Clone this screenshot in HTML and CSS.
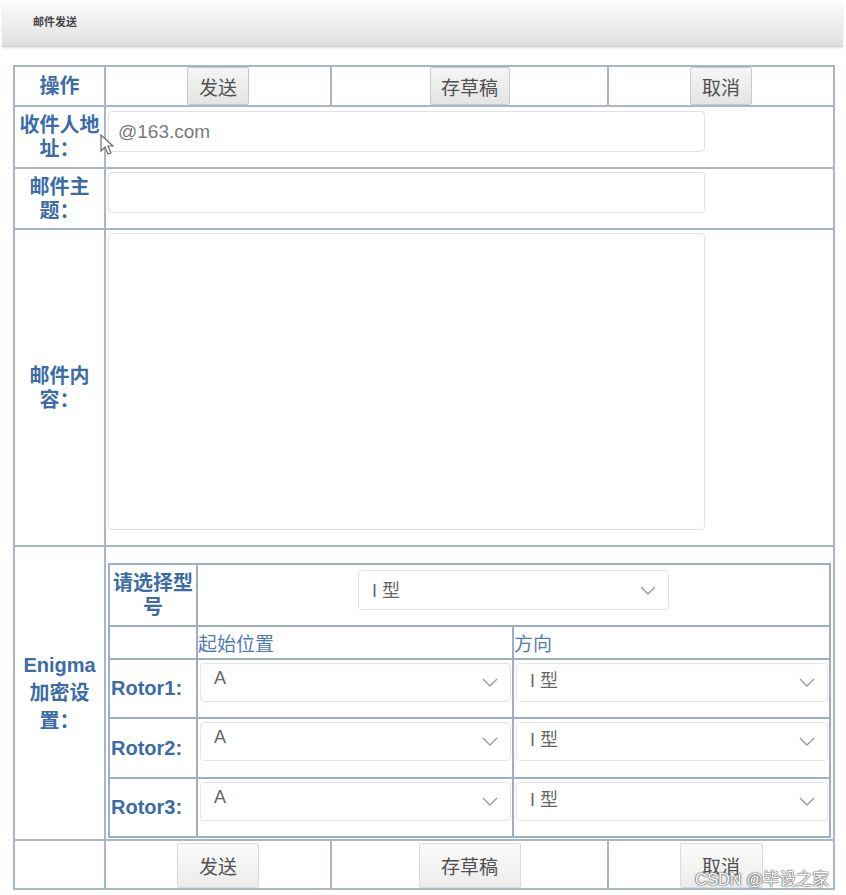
FILE: index.html
```html
<!DOCTYPE html>
<html lang="zh-CN">
<head>
<meta charset="utf-8">
<title>邮件发送</title>
<link rel="stylesheet" href="styles.css">
</head>
<body>
<div class="titlebar"><span class="title">邮件发送</span></div>

<div class="form">
  <div class="cell label">操作</div>
  <div class="cell btncell"><button class="btn w62">发送</button></div>
  <div class="cell btncell"><button class="btn w80">存草稿</button></div>
  <div class="cell btncell"><button class="btn w62">取消</button></div>

  <div class="cell label">收件人地址：</div>
  <div class="cell span3"><div class="field">@163.com</div></div>

  <div class="cell label">邮件主题：</div>
  <div class="cell span3"><div class="field field-sub"></div></div>

  <div class="cell label">邮件内容：</div>
  <div class="cell span3"><div class="area"></div></div>

  <div class="cell label tall">Enigma加密设置：</div>
  <div class="cell span3">
    <div class="enigma">
      <div class="icell label">请选择型号</div>
      <div class="icell span2 center">
        <div class="select sel-model"><span>I 型</span><svg class="chev" viewBox="0 0 16 9"><path d="M1 1 L8 8 L15 1"/></svg></div>
      </div>

      <div class="icell"></div>
      <div class="icell head">起始位置</div>
      <div class="icell head">方向</div>

      <div class="icell rlabel">Rotor1:</div>
      <div class="icell"><div class="select"><span>A</span><svg class="chev" viewBox="0 0 16 9"><path d="M1 1 L8 8 L15 1"/></svg></div></div>
      <div class="icell"><div class="select"><span>I 型</span><svg class="chev" viewBox="0 0 16 9"><path d="M1 1 L8 8 L15 1"/></svg></div></div>

      <div class="icell rlabel">Rotor2:</div>
      <div class="icell"><div class="select"><span>A</span><svg class="chev" viewBox="0 0 16 9"><path d="M1 1 L8 8 L15 1"/></svg></div></div>
      <div class="icell"><div class="select"><span>I 型</span><svg class="chev" viewBox="0 0 16 9"><path d="M1 1 L8 8 L15 1"/></svg></div></div>

      <div class="icell rlabel">Rotor3:</div>
      <div class="icell"><div class="select"><span>A</span><svg class="chev" viewBox="0 0 16 9"><path d="M1 1 L8 8 L15 1"/></svg></div></div>
      <div class="icell"><div class="select"><span>I 型</span><svg class="chev" viewBox="0 0 16 9"><path d="M1 1 L8 8 L15 1"/></svg></div></div>
    </div>
  </div>

  <div class="cell"></div>
  <div class="cell btncell bottom"><button class="btn big w82">发送</button></div>
  <div class="cell btncell bottom"><button class="btn big w102">存草稿</button></div>
  <div class="cell btncell bottom"><button class="btn big w83">取消</button></div>
</div>

<svg class="cursor" viewBox="0 0 14 22"><path d="M1 1 L1 17 L5 13 L8 20 L11 19 L8 12 L13 12 Z"/></svg>
<div class="watermark">CSDN @毕设之家</div>
</body>
</html>
```

FILE: styles.css
```css
* { box-sizing: border-box; }

html, body {
  margin: 0;
  padding: 0;
  background: #ffffff;
}

body {
  position: relative;
  width: 846px;
  height: 895px;
  overflow: hidden;
  font-family: "Liberation Sans", "Noto Sans CJK SC", sans-serif;
}

.titlebar {
  margin: 2px 3px 0 2px;
  height: 45px;
  background: linear-gradient(#fafafa, #e6e6e6 80%, #dcdcdc);
  border-bottom: 1px solid #cfcfcf;
  box-shadow: 0 1px 2px rgba(0, 0, 0, 0.12);
  display: flex;
  align-items: center;
  padding-left: 31px;
  padding-bottom: 6px;
}

.title {
  font-size: 11px;
  font-weight: bold;
  color: #444444;
}

.form {
  display: grid;
  grid-template-columns: 89px 224px 275px 224px;
  grid-template-rows: 38px 60px 59px 315px 292px 47px;
  gap: 2px;
  padding: 2px;
  background: #a7b6ca;
  width: max-content;
  margin: 18px 0 0 13px;
}

.cell {
  background: #ffffff;
  min-width: 0;
}

.span3 { grid-column: span 3; }
.span2 { grid-column: span 2; }

.label {
  display: flex;
  align-items: center;
  justify-content: center;
  text-align: center;
  font-size: 20px;
  line-height: 24px;
  font-weight: bold;
  color: #3b6ca8;
  padding: 0 3px;
}

.label.tall {
  line-height: 28px;
}

.btncell {
  display: flex;
  justify-content: center;
  align-items: stretch;
}

.btncell.bottom {
  padding-top: 2px;
}

.btn {
  font-family: "Liberation Sans", "Noto Sans CJK SC", sans-serif;
  font-size: 19px;
  color: #505050;
  background: linear-gradient(#f6f6f6, #e4e4e4);
  border: 1px solid #c9c9c9;
  border-radius: 2px;
  padding: 0;
  margin: 0;
}

.btn.big {
  background: linear-gradient(#fbfbfb, #ececec);
  border-color: #dadada;
}

.w62 { width: 62px; }
.w80 { width: 80px; }
.w82 { width: 82px; }
.w83 { width: 83px; }
.w102 { width: 102px; }

.field {
  margin: 4px 0 0 2px;
  width: 597px;
  height: 41px;
  border: 1px solid #e2e2e2;
  border-radius: 4px;
  font-size: 19px;
  color: #7a7a7a;
  padding: 9px 0 0 9px;
}

.field-sub {
  margin-top: 3px;
}

.area {
  margin: 3px 0 0 2px;
  width: 597px;
  height: 297px;
  border: 1px solid #e2e2e2;
  border-radius: 4px;
}

.enigma {
  display: grid;
  grid-template-columns: 86px 314px 315px;
  grid-template-rows: 60px 31px 57px 58px 57px;
  gap: 2px;
  padding: 2px;
  background: #9eafc5;
  margin: 16px 2px 0 2px;
}

.icell {
  background: #ffffff;
  min-width: 0;
}

.icell.center {
  display: flex;
  justify-content: center;
}

.head {
  display: flex;
  align-items: center;
  font-size: 19px;
  color: #4f7cb3;
}

.rlabel {
  display: flex;
  align-items: center;
  padding-left: 1px;
  font-size: 20px;
  font-weight: bold;
  color: #3b6ca8;
}

.select {
  display: flex;
  align-items: center;
  justify-content: space-between;
  height: 39px;
  margin: 3px 1px 0 2px;
  border: 1px solid #e4e4e4;
  border-radius: 4px;
  padding: 0 12px 0 13px;
  font-size: 18px;
  color: #666666;
}

.select span {
  margin-top: -8px;
}

.sel-model {
  width: 311px;
  height: 40px;
  margin: 5px 0 0 0;
}

.sel-model span {
  margin-top: -2px;
}

.chev {
  width: 16px;
  height: 9px;
  fill: none;
  stroke: #9a9a9a;
  stroke-width: 1.4;
}

.cursor {
  position: absolute;
  left: 100px;
  top: 134px;
  width: 14px;
  height: 22px;
  fill: #ffffff;
  stroke: #6a6a6a;
  stroke-width: 1.2;
}

.watermark {
  position: absolute;
  left: 695px;
  top: 866px;
  font-size: 16.5px;
  color: #ffffff;
  text-shadow: 0 0 1px #555, 0 0 1px #555, 0 0 2px #666;
  white-space: nowrap;
}
```
